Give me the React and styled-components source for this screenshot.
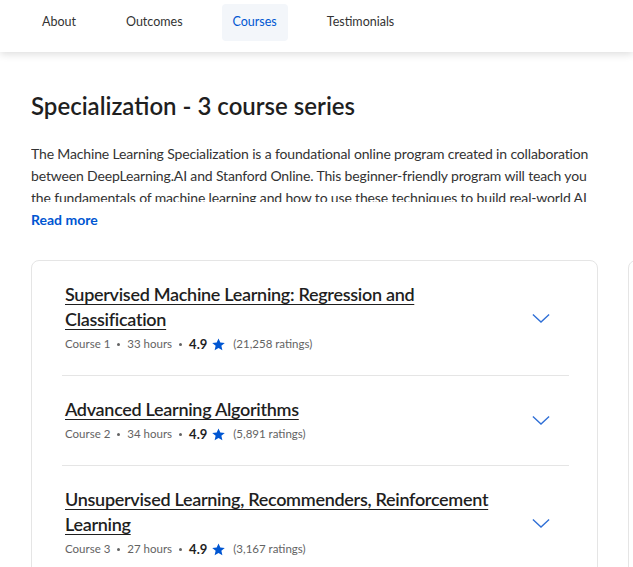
import React from "react";
import styled, { createGlobalStyle } from "styled-components";

const GlobalStyle = createGlobalStyle`
  html, body {
    margin: 0;
    padding: 0;
    background: #ffffff;
    overflow: hidden;
  }
  body {
    font-family: Lato, "Noto Sans", sans-serif;
    color: #1f1f1f;
  }
`;

const navItems = ["About", "Outcomes", "Courses", "Testimonials"];

const courses = [
  {
    title: "Supervised Machine Learning: Regression and Classification",
    number: 1,
    hours: 33,
    rating: "4.9",
    count: "21,258",
  },
  {
    title: "Advanced Learning Algorithms",
    number: 2,
    hours: 34,
    rating: "4.9",
    count: "5,891",
  },
  {
    title: "Unsupervised Learning, Recommenders, Reinforcement Learning",
    number: 3,
    hours: 27,
    rating: "4.9",
    count: "3,167",
  },
];

export default function App() {
  return (
    <>
      <GlobalStyle />
      <Header>
        <Nav>
          {navItems.map((item) => (
            <NavItem key={item} $active={item === "Courses"}>
              {item}
            </NavItem>
          ))}
        </Nav>
      </Header>
      <Main>
        <Title>Specialization - 3 course series</Title>
        <Description>
          The Machine Learning Specialization is a foundational online program
          created in collaboration between DeepLearning.AI and Stanford Online.
          This beginner-friendly program will teach you the fundamentals of
          machine learning and how to use these techniques to build real-world
          AI applications.
        </Description>
        <ReadMore href="#">Read more</ReadMore>
        <Cards>
          <Card>
            {courses.map((course, i) => (
              <CourseRow key={course.number} $last={i === courses.length - 1}>
                <CourseInfo>
                  <CourseTitle href="#">{course.title}</CourseTitle>
                  <Meta>
                    <span>Course {course.number}</span>
                    <Dot />
                    <span>{course.hours} hours</span>
                    <Dot />
                    <Rating>{course.rating}</Rating>
                    <Star viewBox="0 0 24 24">
                      <path d="M12 2.2l2.9 6.6 7.1.6-5.4 4.7 1.6 7-6.2-3.7-6.2 3.7 1.6-7L2 9.4l7.1-.6z" />
                    </Star>
                    <span>({course.count} ratings)</span>
                  </Meta>
                </CourseInfo>
                <Chevron viewBox="0 0 20 12">
                  <path d="M1 1.5l9 8.5 9-8.5" />
                </Chevron>
              </CourseRow>
            ))}
          </Card>
          <Card />
        </Cards>
      </Main>
    </>
  );
}

const Header = styled.header`
  height: 52px;
  background: #ffffff;
  box-shadow: 0 2px 8px rgba(0, 0, 0, 0.14);
  position: relative;
  z-index: 1;
`;

const Nav = styled.nav`
  display: flex;
  gap: 28px;
  padding: 4px 0 0 31px;
`;

const NavItem = styled.a`
  display: flex;
  align-items: center;
  height: 37px;
  padding: 0 11px 3px;
  box-sizing: border-box;
  border-radius: 4px;
  font-size: 12.5px;
  color: ${(p) => (p.$active ? "#0056d2" : "#333333")};
  background: ${(p) => (p.$active ? "#f3f6fa" : "transparent")};
`;

const Main = styled.main`
  padding: 39px 0 0 31px;
`;

const Title = styled.h2`
  margin: 0;
  font-size: 24px;
  line-height: 30px;
  font-weight: 600;
  color: #1f1f1f;
`;

const Description = styled.p`
  margin: 22px 0 0;
  width: 575px;
  font-size: 14px;
  line-height: 22px;
  letter-spacing: -0.15px;
  color: #333333;
  max-height: 59px;
  overflow: hidden;
`;

const ReadMore = styled.a`
  display: inline-block;
  margin-top: 8px;
  font-size: 14px;
  line-height: 20px;
  font-weight: 700;
  color: #0056d2;
  text-decoration: none;
`;

const Cards = styled.div`
  display: flex;
  gap: 30px;
  margin-top: 30px;
`;

const Card = styled.section`
  flex: 0 0 567px;
  box-sizing: border-box;
  border: 1px solid #e5e5e5;
  border-radius: 8px;
  padding: 0 28px 0 30px;
  min-height: 320px;
`;

const CourseRow = styled.div`
  display: flex;
  align-items: center;
  justify-content: space-between;
  padding: 21px 0;
  border-bottom: ${(p) => (p.$last ? "none" : "1px solid #e5e5e5")};
`;

const CourseInfo = styled.div`
  display: flex;
  flex-direction: column;
  gap: 2px;
  padding-left: 3px;
`;

const CourseTitle = styled.a`
  font-size: 18px;
  line-height: 25px;
  font-weight: 600;
  letter-spacing: -0.3px;
  color: #1f1f1f;
  text-decoration: underline;
  text-underline-offset: 3px;
  max-width: 440px;
`;

const Meta = styled.div`
  display: flex;
  align-items: center;
  font-size: 11.5px;
  line-height: 20px;
  color: #636363;
`;

const Dot = styled.span`
  width: 3px;
  height: 3px;
  border-radius: 50%;
  background: #636363;
  margin: 0 7px;
`;

const Rating = styled.span`
  font-weight: 700;
  font-size: 13px;
  color: #1f1f1f;
`;

const Star = styled.svg`
  width: 15px;
  height: 15px;
  margin: 0 7px 0 4px;
  fill: #0056d2;
`;

const Chevron = styled.svg`
  width: 18px;
  height: 11px;
  margin-right: 19px;
  fill: none;
  stroke: #2f6fd6;
  stroke-width: 1.5;
`;
